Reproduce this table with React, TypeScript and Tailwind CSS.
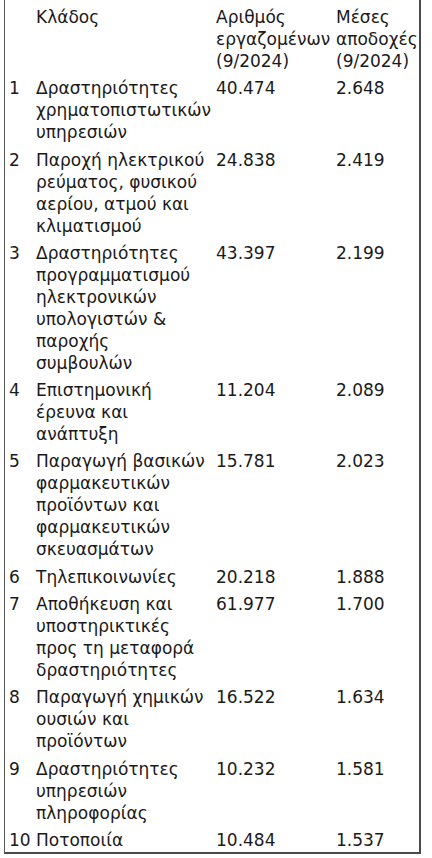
const rows: { n: string; name: string[]; workers: string; pay: string }[] = [
  { n: '1', name: ['Δραστηριότητες', 'χρηματοπιστωτικών', 'υπηρεσιών'], workers: '40.474', pay: '2.648' },
  { n: '2', name: ['Παροχή ηλεκτρικού', 'ρεύματος, φυσικού', 'αερίου, ατμού και', 'κλιματισμού'], workers: '24.838', pay: '2.419' },
  {
    n: '3',
    name: ['Δραστηριότητες', 'προγραμματισμού', 'ηλεκτρονικών', 'υπολογιστών &', 'παροχής', 'συμβουλών'],
    workers: '43.397',
    pay: '2.199',
  },
  { n: '4', name: ['Επιστημονική', 'έρευνα και', 'ανάπτυξη'], workers: '11.204', pay: '2.089' },
  {
    n: '5',
    name: ['Παραγωγή βασικών', 'φαρμακευτικών', 'προϊόντων και', 'φαρμακευτικών', 'σκευασμάτων'],
    workers: '15.781',
    pay: '2.023',
  },
  { n: '6', name: ['Τηλεπικοινωνίες'], workers: '20.218', pay: '1.888' },
  { n: '7', name: ['Αποθήκευση και', 'υποστηρικτικές', 'προς τη μεταφορά', 'δραστηριότητες'], workers: '61.977', pay: '1.700' },
  { n: '8', name: ['Παραγωγή χημικών', 'ουσιών και', 'προϊόντων'], workers: '16.522', pay: '1.634' },
  { n: '9', name: ['Δραστηριότητες', 'υπηρεσιών', 'πληροφορίας'], workers: '10.232', pay: '1.581' },
  { n: '10', name: ['Ποτοποιία'], workers: '10.484', pay: '1.537' },
]

function Lines({ lines }: { lines: string[] }) {
  return (
    <div>
      {lines.map((l) => (
        <div key={l} className="whitespace-nowrap">
          {l}
        </div>
      ))}
    </div>
  )
}

export default function App() {
  return (
    <div className="min-h-[858px] bg-white" style={{ fontFamily: '"DejaVu Sans", Verdana, sans-serif' }}>
      <div className="ml-[4px] w-[417px] border-l border-r-2 border-b-2 border-l-[#5a5a5a] border-r-[#4a4a4a] border-b-[#4a4a4a] pl-[4px] pt-[6px] pb-[1px]">
        <div className="grid grid-cols-[22px_175px_115px_1fr] gap-x-[5px] gap-y-[5.3px] text-[17px] leading-[22px] text-[#1a1a1a]">
          {/* Header */}
          <div />
          <div>Κλάδος</div>
          <Lines lines={['Αριθμός', 'εργαζομένων', '(9/2024)']} />
          <Lines lines={['Μέσες', 'αποδοχές', '(9/2024)']} />

          {rows.map((r) => (
            <div key={r.n} className="contents">
              <div className="whitespace-nowrap">{r.n}</div>
              <Lines lines={r.name} />
              <div>{r.workers}</div>
              <div>{r.pay}</div>
            </div>
          ))}
        </div>
      </div>
    </div>
  )
}
